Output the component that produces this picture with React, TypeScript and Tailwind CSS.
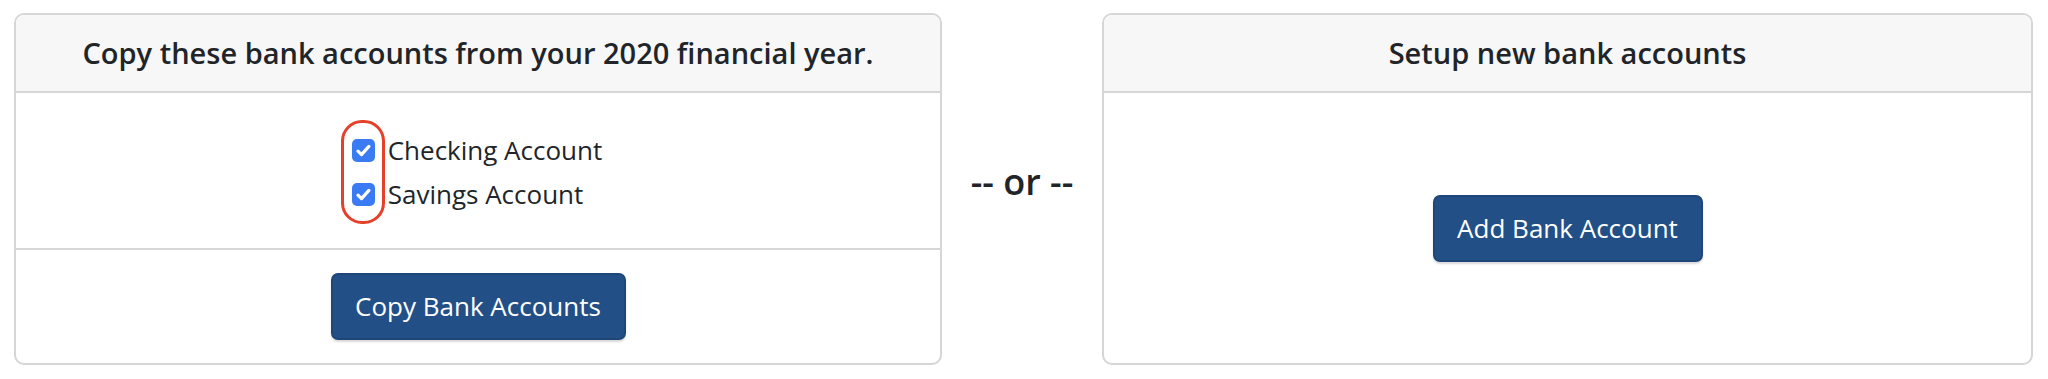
import React from 'react';

const font = { fontFamily: '"Open Sans", "Noto Sans", sans-serif' };

const Check = ({ label }: { label: string }) => (
  <label className="flex items-center h-[44px] text-[26px] text-[#212529]">
    <span className="w-[23px] h-[23px] rounded-[5px] bg-[#3a7bf4] flex items-center justify-center mr-[13px]">
      <svg width="17" height="17" viewBox="0 0 16 16" fill="none">
        <path d="M2.8 8.6l3.3 3.3 7-7.8" stroke="white" strokeWidth="3" strokeLinecap="round" strokeLinejoin="round" />
      </svg>
    </span>
    {label}
  </label>
);

const Button = ({ children, className }: { children: React.ReactNode; className: string }) => (
  <button
    className={`h-[67px] rounded-[7px] bg-[#234f87] border-2 border-[#1f4679] text-white text-[26px] shadow-[0_2px_2px_rgba(0,0,0,0.15)] ${className}`}
  >
    {children}
  </button>
);

const PanelHeader = ({ title }: { title: string }) => (
  <div className="h-[78px] bg-[#f7f7f7] border-b-2 border-[#d6d6d6] rounded-t-[8px] flex items-center justify-center text-[29px] font-semibold text-[#212529]">
    {title}
  </div>
);

export default function App() {
  return (
    <div className="bg-white w-[2048px] h-[379px] pt-[13px] pl-[14px]" style={font}>
      <div className="flex">
        <div className="w-[928px] h-[352px] border-2 border-[#d6d6d6] rounded-[10px] flex flex-col">
          <PanelHeader title="Copy these bank accounts from your 2020 financial year." />
          <div className="h-[157px] border-b-2 border-[#d6d6d6] flex items-center justify-center">
            <div className="relative flex flex-col -ml-[2px] mt-[4px]">
              <Check label="Checking Account" />
              <Check label="Savings Account" />
              <span className="absolute left-[-11px] top-[-9px] w-[44px] h-[104px] border-[3px] border-[#e5402a] rounded-[21px] pointer-events-none" />
            </div>
          </div>
          <div className="flex-1 flex items-center justify-center">
            <Button className="w-[295px]">Copy Bank Accounts</Button>
          </div>
        </div>

        <div className="w-[160px] flex items-center justify-center pb-[14px] text-[36px] font-semibold text-[#212529]">
          -- or --
        </div>

        <div className="w-[931px] h-[352px] border-2 border-[#d6d6d6] rounded-[10px] flex flex-col">
          <PanelHeader title="Setup new bank accounts" />
          <div className="flex-1 flex items-center justify-center">
            <Button className="w-[270px]">Add Bank Account</Button>
          </div>
        </div>
      </div>
    </div>
  );
}
